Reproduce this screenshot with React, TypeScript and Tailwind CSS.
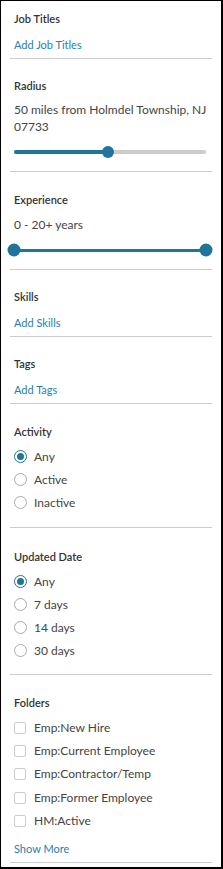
import React from "react";

const font = { fontFamily: "Lato, 'Noto Sans', sans-serif" };

function Divider() {
  return <div className="mx-[9px] h-px bg-[#cccccc]" />;
}

function Title({ children }: { children: React.ReactNode }) {
  return (
    <div className="h-[26px] flex items-center text-[11px] font-semibold text-[#333333]">
      {children}
    </div>
  );
}

function LinkRow({ children }: { children: React.ReactNode }) {
  return (
    <div className="h-[26px] flex items-center text-[11px] text-[#2a80ab]">
      {children}
    </div>
  );
}

function Radio({ label, checked }: { label: string; checked?: boolean }) {
  return (
    <div className="h-[23px] flex items-center gap-[7px]">
      {checked ? (
        <span className="w-[13px] h-[13px] rounded-full border border-[#21759b] flex items-center justify-center">
          <span className="w-[7px] h-[7px] rounded-full bg-[#21759b]" />
        </span>
      ) : (
        <span className="w-[13px] h-[13px] rounded-full border border-[#aaaaaa] bg-white" />
      )}
      <span className="text-[12px] text-[#444444]">{label}</span>
    </div>
  );
}

function Check({ label }: { label: string }) {
  return (
    <div className="h-[23.3px] flex items-center gap-[8px]">
      <span className="w-[12px] h-[12px] rounded-[2px] border border-[#cccccc] bg-white" />
      <span className="text-[12px] text-[#444444]">{label}</span>
    </div>
  );
}

export default function App() {
  return (
    <div
      className="w-[223px] h-[869px] bg-white border-l border-t border-r-2 border-b-2 border-black overflow-hidden"
      style={font}
    >
      {/* Job Titles */}
      <div className="px-[13px] pt-[5px]">
        <Title>Job Titles</Title>
        <LinkRow>Add Job Titles</LinkRow>
      </div>
      <Divider />

      {/* Radius */}
      <div className="px-[13px] pt-[14px] pb-[9px]">
        <Title>Radius</Title>
        <div className="mt-[2px] text-[12px] leading-[17px] text-[#444444]">
          50 miles from Holmdel Township, NJ 07733
        </div>
        <div className="mt-[7px] mr-[2px] h-[20px] flex items-center">
          <div className="relative w-full h-[4px] rounded-full bg-[#cccccc]">
            <div className="absolute left-0 top-0 h-full w-[49%] rounded-full bg-[#21759b]" />
            <div className="absolute left-[49%] top-1/2 -translate-x-1/2 -translate-y-1/2 w-[12px] h-[12px] rounded-full bg-[#21759b]" />
          </div>
        </div>
      </div>
      <Divider />

      {/* Experience */}
      <div className="px-[13px] pt-[15px] pb-[9px]">
        <Title>Experience</Title>
        <div className="mt-[3px] text-[12px] leading-[17px] text-[#444444]">0 - 20+ years</div>
        <div className="mt-[7px] mr-[2px] h-[20px] flex items-center">
          <div className="relative w-full h-[3px] bg-[#21759b]">
            <div className="absolute left-0 top-1/2 -translate-x-1/2 -translate-y-1/2 w-[13px] h-[13px] rounded-full bg-[#21759b]" />
            <div className="absolute left-full top-1/2 -translate-x-1/2 -translate-y-1/2 w-[13px] h-[13px] rounded-full bg-[#21759b]" />
          </div>
        </div>
      </div>
      <Divider />

      {/* Skills */}
      <div className="px-[13px] pt-[14px]">
        <Title>Skills</Title>
        <LinkRow>Add Skills</LinkRow>
      </div>
      <Divider />

      {/* Tags */}
      <div className="px-[13px] pt-[14px]">
        <Title>Tags</Title>
        <LinkRow>Add Tags</LinkRow>
      </div>
      <Divider />

      {/* Activity */}
      <div className="px-[13px] pt-[15px] pb-[13px]">
        <Title>Activity</Title>
        <Radio label="Any" checked />
        <Radio label="Active" />
        <Radio label="Inactive" />
      </div>
      <Divider />

      {/* Updated Date */}
      <div className="px-[13px] pt-[16px] pb-[12px]">
        <Title>Updated Date</Title>
        <Radio label="Any" checked />
        <Radio label="7 days" />
        <Radio label="14 days" />
        <Radio label="30 days" />
      </div>
      <Divider />

      {/* Folders */}
      <div className="px-[13px] pt-[15px]">
        <Title>Folders</Title>
        <Check label="Emp:New Hire" />
        <Check label="Emp:Current Employee" />
        <Check label="Emp:Contractor/Temp" />
        <Check label="Emp:Former Employee" />
        <Check label="HM:Active" />
        <div className="mt-[4px]">
          <LinkRow>Show More</LinkRow>
        </div>
      </div>
      <Divider />
    </div>
  );
}
